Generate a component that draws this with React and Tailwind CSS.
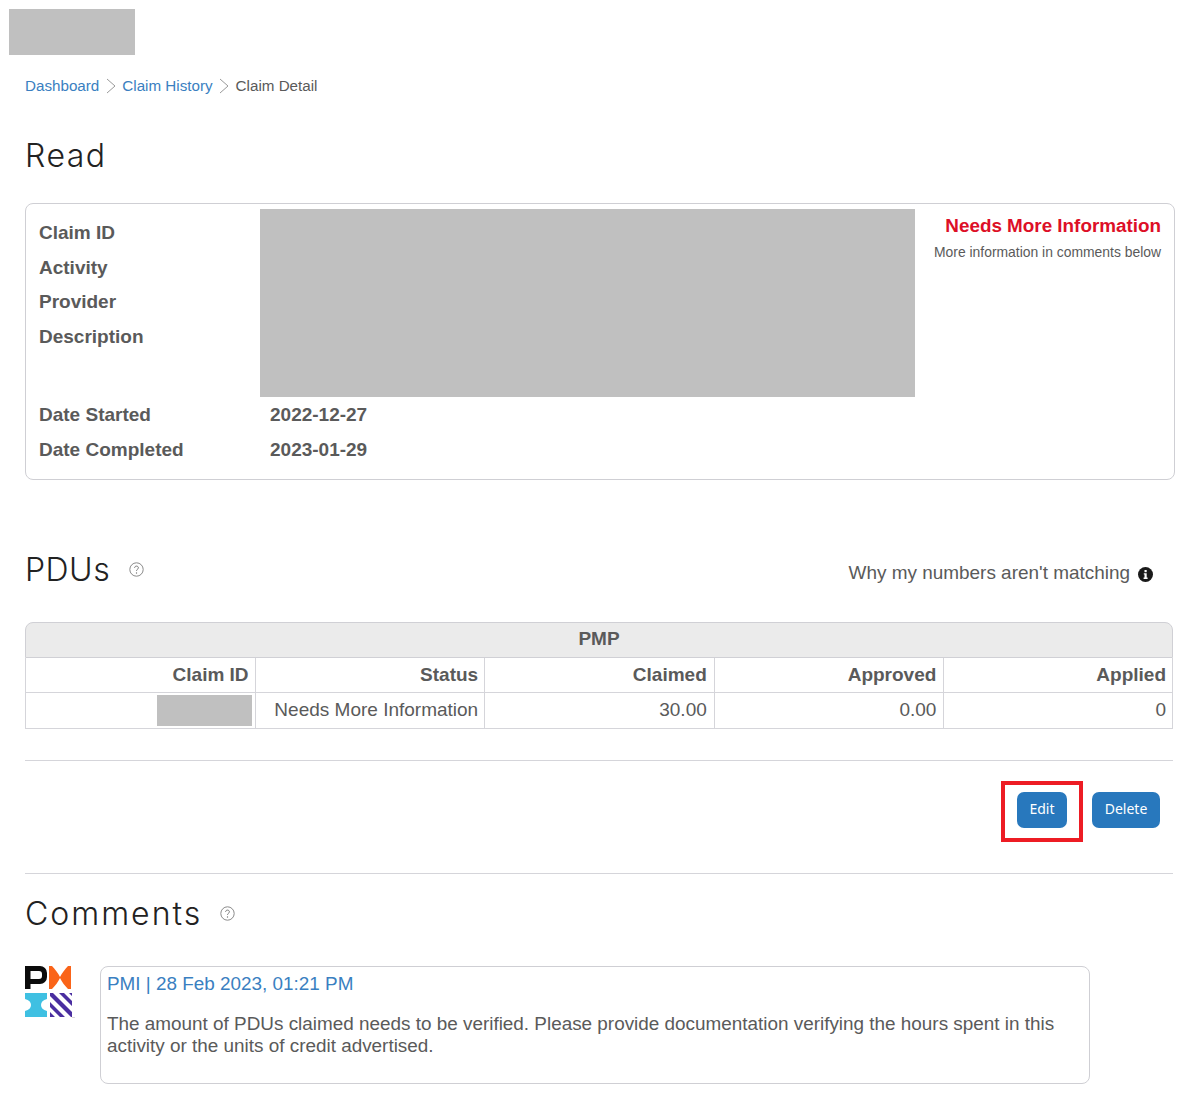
import React from 'react';

const sans = 'font-["Liberation_Sans",Arial,sans-serif]';

function Chevron() {
  return (
    <svg width="10" height="16" viewBox="0 0 10 16" fill="none" stroke="#9a9a9a" strokeWidth="1" className="mx-[6.5px]">
      <path d="M1 1l8 7-8 7" />
    </svg>
  );
}

function HelpIcon() {
  return (
    <svg width="15" height="15" viewBox="0 0 15 15" fill="none">
      <circle cx="7.5" cy="7.5" r="6.7" stroke="#8a8a8a" strokeWidth="1" />
      <path d="M5.6 5.9c0-1.1.9-1.8 1.9-1.8s1.9.7 1.9 1.7c0 1.5-1.9 1.5-1.9 3" stroke="#777" strokeWidth="1" />
      <circle cx="7.5" cy="11" r=".7" fill="#777" />
    </svg>
  );
}

function InfoIcon() {
  return (
    <svg width="15" height="15" viewBox="0 0 15 15">
      <circle cx="7.5" cy="7.5" r="7.5" fill="#1a1a1a" />
      <rect x="6.5" y="3" width="2.2" height="2.2" fill="#fff" />
      <path d="M5.8 6.3h2.9v4.3h.9V12H5.6v-1.4h.9V7.6h-.7z" fill="#fff" />
    </svg>
  );
}

function PmiLogo() {
  return (
    <svg width="50" height="52" viewBox="0 0 50 52" className="shrink-0">
      <path fillRule="evenodd" d="M0 0h15a7 7 0 0 1 7 7v4a7 7 0 0 1-7 7H5.5v5H0zM5.5 5v8H14a3 3 0 0 0 3-3V8a3 3 0 0 0-3-3z" fill="#0b0b0b" />
      <path d="M24 0h3C30 3 33 7 35 11 37 7 40 3 43 0h3v23h-3C40 20 37 16 35 12 33 16 30 20 27 23h-3z" fill="#fa6419" />
      <path d="M0 27h22v6c-4 1-6 3-6 6s2 5 6 6v6H0v-6c4-1 6-3 6-6s-2-5-6-6z" fill="#3fc0e2" />
      <path d="M25 27h3l19 19v5h-1L25 30z M34 27h5l8 8v5z M25 36l15 15h-5L25 41z M25 46l5 5h-5z M44 27h3v3z" fill="#4a2ea0" />
      <text x="47" y="51.5" fontSize="2" fill="#888">TM</text>
    </svg>
  );
}

function Heading({ className, children }) {
  return <h2 className={`font-["Inter",sans-serif] font-light text-[32px] leading-[40px] text-[#222] translate-y-px ${className}`}>{children}</h2>;
}

const cell = 'border border-[#d5d5da] px-[6px] text-right h-[35px] align-middle';

export default function App() {
  return (
    <div className={`${sans} w-[1200px] h-[1099px] overflow-hidden bg-white text-[#5a5a5a]`}>
      <div className="ml-[9px] pt-[9px]">
        <div className="w-[126px] h-[46px] bg-[#c0c0c0]" />
      </div>

      <div className="px-[25px]">
        <nav className="flex items-center mt-[22px] h-[18px] text-[15.2px]">
          <a className="text-[#3a7fc1]">Dashboard</a>
          <Chevron />
          <a className="text-[#3a7fc1]">Claim History</a>
          <Chevron />
          <span>Claim Detail</span>
        </nav>

        <div className="mt-[40px]">
          <Heading className="tracking-[1.5px]">Read</Heading>
        </div>

        <section className="mt-[28px] w-[1150px] h-[277px] border border-[#cfcfd4] rounded-[8px] flex font-bold text-[19px] leading-[34.5px]">
          <div className="w-[234px] pl-[13px] pt-[12px] shrink-0">
            <div>Claim ID</div>
            <div>Activity</div>
            <div>Provider</div>
            <div>Description</div>
            <div className="mt-[44px]">Date Started</div>
            <div>Date Completed</div>
          </div>
          <div className="w-[655px] pt-[5px] shrink-0">
            <div className="h-[188px] bg-[#c0c0c0]" />
            <div className="pl-[10px] pt-[1px]">
              <div>2022-12-27</div>
              <div>2023-01-29</div>
            </div>
          </div>
          <div className="flex-1 pr-[13px] pt-[9px] text-right">
            <div className="text-[#dd0f27] text-[18.85px] leading-[26px]">Needs More Information</div>
            <div className="font-normal text-[13.9px] leading-[26px]">More information in comments below</div>
          </div>
        </section>

        <div className="mt-[69px] flex items-center h-[40px]">
          <Heading className="tracking-[0.5px]">PDUs</Heading>
          <div className="ml-[19px]"><HelpIcon /></div>
          <div className="ml-auto flex items-center pr-[22px] text-[18.95px] pt-[8px]">
            <span>Why my numbers aren't matching</span>
            <span className="ml-[8px] mt-[3px]"><InfoIcon /></span>
          </div>
        </div>

        <table className="mt-[33px] w-[1148px] table-fixed border-separate border-spacing-0 text-[19px]">
          <thead>
            <tr>
              <th colSpan={5} className="h-[36px] pb-[1px] bg-[#ebebeb] border border-[#d0d0d5] rounded-t-[8px] text-center font-bold">PMP</th>
            </tr>
            <tr className="font-bold">
              <th className={`${cell} border-t-0 border-r-0`}>Claim ID</th>
              <th className={`${cell} border-t-0 border-r-0`}>Status</th>
              <th className={`${cell} border-t-0 border-r-0 !pr-[7px]`}>Claimed</th>
              <th className={`${cell} border-t-0 border-r-0 !pr-[7px]`}>Approved</th>
              <th className={`${cell} border-t-0`}>Applied</th>
            </tr>
          </thead>
          <tbody>
            <tr className="h-[36px]">
              <td className={`${cell} border-t-0 border-r-0 !pr-[3px] py-[1px]`}>
                <div className="ml-auto w-[95px] h-[31px] bg-[#c0c0c0]" />
              </td>
              <td className={`${cell} border-t-0 border-r-0`}>Needs More Information</td>
              <td className={`${cell} border-t-0 border-r-0 !pr-[7px]`}>30.00</td>
              <td className={`${cell} border-t-0 border-r-0 !pr-[7px]`}>0.00</td>
              <td className={`${cell} border-t-0`}>0</td>
            </tr>
          </tbody>
        </table>

        <div className="mt-[31px] w-[1148px] border-t border-[#d5d5da]" />

        <div className='mt-[20px] w-[1135px] flex items-start justify-end font-["Noto_Sans",sans-serif] text-[14px] text-white'>
          <div className="border-[4px] border-[#ed1c24] w-[82px] h-[61px] flex justify-center pt-[7px]">
            <button className="w-[50px] h-[36px] pb-[3px] rounded-[7px] bg-[#2878bd]">Edit</button>
          </div>
          <button className="ml-[9px] mt-[11px] w-[68px] h-[36px] pb-[3px] rounded-[7px] bg-[#2878bd]">Delete</button>
        </div>

        <div className="mt-[31px] w-[1148px] border-t border-[#d5d5da]" />

        <div className="mt-[19px] flex items-center h-[40px]">
          <Heading className="tracking-[2px]">Comments</Heading>
          <div className="ml-[18px] mt-[1px]"><HelpIcon /></div>
        </div>

        <div className="mt-[33px] flex">
          <PmiLogo />
          <article className="ml-[25px] w-[990px] h-[118px] border border-[#cfcfd4] rounded-[8px] px-[6px] pt-[6px] text-[18.9px] leading-[22px]">
            <div className="text-[#3a7fc1]">PMI | 28 Feb 2023, 01:21 PM</div>
            <p className="mt-[18px]">The amount of PDUs claimed needs to be verified. Please provide documentation verifying the hours spent in this activity or the units of credit advertised.</p>
          </article>
        </div>
      </div>
    </div>
  );
}
